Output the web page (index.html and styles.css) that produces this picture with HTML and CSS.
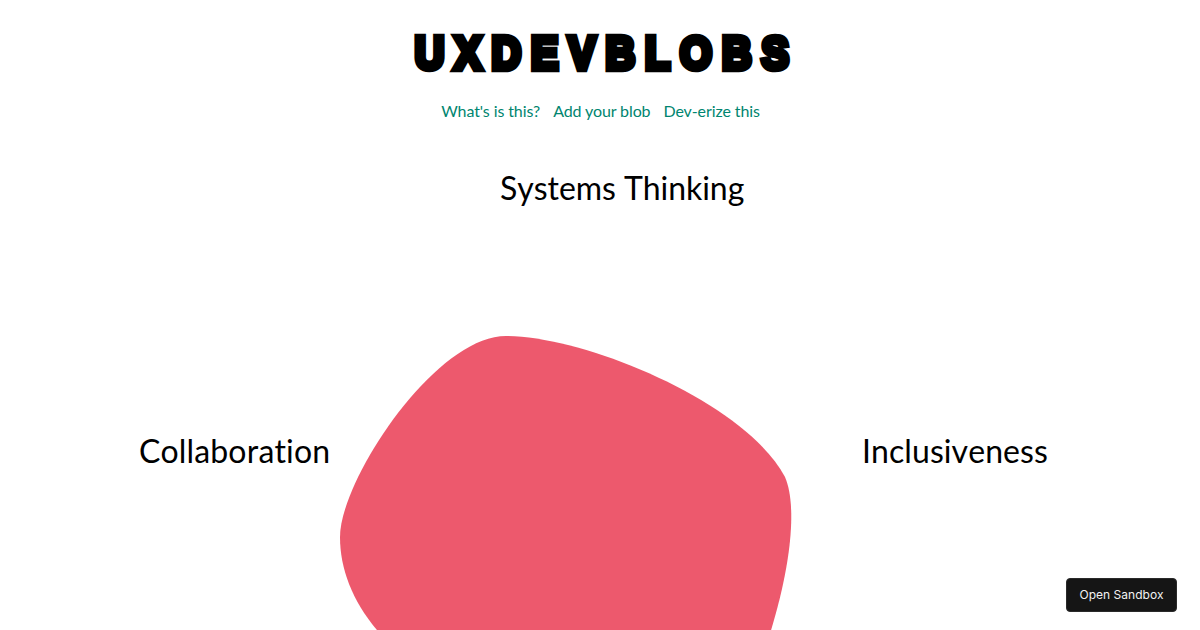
FILE: index.html
```html
<!DOCTYPE html>
<html lang="en">
<head>
<meta charset="utf-8">
<title>UXDEVBLOBS</title>
<link rel="stylesheet" href="styles.css">
</head>
<body>
<header class="header">
  <h1 class="logo">UXDEVBLOBS</h1>
  <nav class="nav">
    <a href="#">What's is this?</a>
    <a href="#">Add your blob</a>
    <a href="#">Dev-erize this</a>
  </nav>
</header>
<main class="stage">
  <span class="label label-top">Systems Thinking</span>
  <span class="label label-left">Collaboration</span>
  <span class="label label-right">Inclusiveness</span>
  <svg class="blob" viewBox="0 0 470 310" width="470" height="310" aria-hidden="true">
    <path d="M176 6 C 255 6 415 72 455 147 C 467 175 462 235 438 310 L 56 310 C 25 278 10 242 10 207 C 10 150 105 6 176 6 Z"/>
  </svg>
</main>
<a class="sandbox" href="#">Open Sandbox</a>
</body>
</html>
```
FILE: styles.css
```css
* { box-sizing: border-box; }
html, body { margin: 0; height: 100%; }
body {
  width: 1200px;
  height: 630px;
  overflow: hidden;
  background: #fff;
  color: #000;
  font-family: "Lato", sans-serif;
  font-variant-ligatures: none;
  position: relative;
}
.header {
  display: flex;
  flex-direction: column;
  align-items: center;
  padding-top: 24px;
}
.logo {
  margin: 0;
  padding-left: 16px;
  font-family: "Liberation Sans", sans-serif;
  font-weight: 700;
  font-size: 47px;
  line-height: 58px;
  letter-spacing: 11.5px;
  -webkit-text-stroke: 6.5px #000;
  transform: scaleX(0.87);
}
.nav {
  display: flex;
  gap: 13px;
  margin-top: 19px;
  padding-left: 1px;
  font-size: 16px;
  line-height: 20px;
  letter-spacing: -0.1px;
}
.nav a { color: #00856f; text-decoration: none; }
.stage {
  position: absolute;
  inset: 0;
  pointer-events: none;
}
.label {
  position: absolute;
  font-size: 32px;
  line-height: 40px;
  white-space: nowrap;
  font-kerning: none;
}
.label-top { left: 500px; top: 168px; letter-spacing: -0.06px; }
.label-left { left: 139px; top: 431px; letter-spacing: 0.15px; }
.label-right { left: 862px; top: 431px; letter-spacing: 0.08px; }
.blob {
  position: absolute;
  left: 330px;
  top: 330px;
  display: block;
}
.blob path { fill: #ed596d; }
.sandbox {
  position: absolute;
  right: 23px;
  bottom: 18px;
  width: 111px;
  height: 34px;
  padding-bottom: 1px;
  display: flex;
  align-items: center;
  justify-content: center;
  background: #151515;
  border: 1px solid #2a2a2a;
  border-radius: 4px;
  color: #f2f2f2;
  font-family: "Inter", sans-serif;
  font-size: 12px;
  letter-spacing: 0.03px;
  text-decoration: none;
}
```
